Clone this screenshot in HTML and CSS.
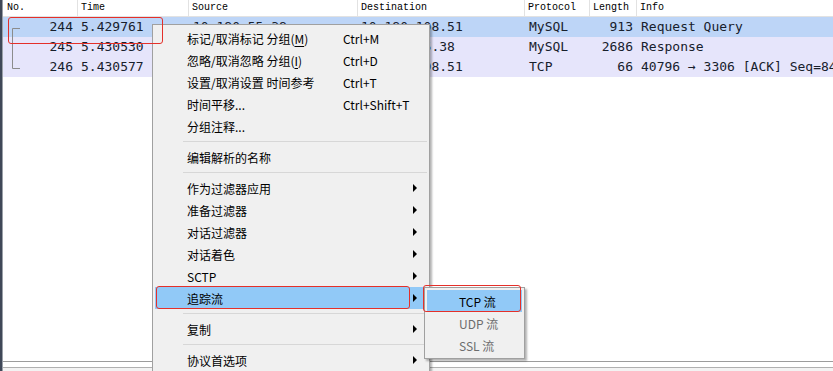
FILE: index.html
```html
<!DOCTYPE html>
<html>
<head>
<meta charset="utf-8">
<link rel="stylesheet" href="styles.css">
</head>
<body>
<div class="window">
  <div class="edge"></div>
  <div class="pane">
    <div class="head cols">
      <div class="h first">No.</div>
      <div class="h">Time</div>
      <div class="h">Source</div>
      <div class="h">Destination</div>
      <div class="h">Protocol</div>
      <div class="h">Length</div>
      <div class="h">Info</div>
    </div>
    <div class="rows">
      <div class="row cols sel">
        <div class="c num">244</div><div class="c">5.429761</div><div class="c src">10.180.55.38</div><div class="c">10.180.108.51</div><div class="c pro">MySQL</div><div class="c len">913</div><div class="c info">Request Query</div>
      </div>
      <div class="row cols tcp">
        <div class="c num">245</div><div class="c">5.430530</div><div class="c src">10.180.108.51</div><div class="c">10.180.55.38</div><div class="c pro">MySQL</div><div class="c len">2686</div><div class="c info">Response</div>
      </div>
      <div class="row cols tcp">
        <div class="c num">246</div><div class="c">5.430577</div><div class="c src">10.180.55.38</div><div class="c">10.180.108.51</div><div class="c pro">TCP</div><div class="c len">66</div><div class="c info">40796 → 3306 [ACK] Seq=848 Ack=2687 Win=65535 Len=0</div>
      </div>
      <svg class="tree" width="10" height="44" viewBox="0 0 10 44">
        <path d="M1.5 1.5 V41.5 M1.5 1.5 H9 M1.5 41.5 H9" fill="none" stroke="#8c8c8c" stroke-width="1"/>
      </svg>
    </div>
    <div class="spacer"></div>
    <div class="foot"><div class="foot-line"></div></div>
  </div>
</div>

<div class="menu">
  <div class="item"><span class="label">标记/取消标记 分组(<u>M</u>)</span><span class="key">Ctrl+M</span></div>
  <div class="item"><span class="label">忽略/取消忽略 分组(<u>I</u>)</span><span class="key">Ctrl+D</span></div>
  <div class="item"><span class="label">设置/取消设置 时间参考</span><span class="key">Ctrl+T</span></div>
  <div class="item"><span class="label">时间平移...</span><span class="key">Ctrl+Shift+T</span></div>
  <div class="item"><span class="label">分组注释...</span></div>
  <div class="sep"></div>
  <div class="item"><span class="label">编辑解析的名称</span></div>
  <div class="sep"></div>
  <div class="item sub"><span class="label">作为过滤器应用</span><span class="arrow"></span></div>
  <div class="item sub"><span class="label">准备过滤器</span><span class="arrow"></span></div>
  <div class="item sub"><span class="label">对话过滤器</span><span class="arrow"></span></div>
  <div class="item sub"><span class="label">对话着色</span><span class="arrow"></span></div>
  <div class="item sub"><span class="label">SCTP</span><span class="arrow"></span></div>
  <div class="item sub hot"><span class="label">追踪流</span><span class="arrow"></span></div>
  <div class="sep"></div>
  <div class="item sub"><span class="label">复制</span><span class="arrow"></span></div>
  <div class="sep"></div>
  <div class="item sub"><span class="label">协议首选项</span><span class="arrow"></span></div>
</div>

<div class="menu submenu">
  <div class="item hot"><span class="label">TCP 流</span></div>
  <div class="item off"><span class="label">UDP 流</span></div>
  <div class="item off"><span class="label">SSL 流</span></div>
</div>

<div class="mark mark-row"></div>
<div class="mark mark-item"></div>
<div class="mark mark-sub"></div>
</body>
</html>
```

FILE: styles.css
```css
html, body {
  margin: 0;
  padding: 0;
}
body {
  width: 833px;
  height: 371px;
  overflow: hidden;
  background: #ffffff;
  position: relative;
}
.window {
  display: flex;
  height: 371px;
}
.edge {
  width: 2px;
  background: #3f4858;
  border-right: 1px solid #9aa0a8;
  flex: none;
}
.pane {
  flex: 1;
  min-width: 0;
  display: flex;
  flex-direction: column;
}
.cols {
  display: grid;
  grid-template-columns: 74px 111px 169px 167px 65px 47px 1fr;
}
.head {
  height: 16px;
  border-bottom: 1px solid #e2e2e2;
  font-family: "Liberation Mono", monospace;
  font-size: 10px;
  line-height: 16px;
  color: #000;
}
.h {
  border-left: 1px solid #e2e2e2;
  padding-left: 3px;
  white-space: nowrap;
  overflow: hidden;
}
.h.first {
  border-left: none;
  padding-left: 4px;
}
.rows {
  position: relative;
}
.row {
  height: 20px;
  line-height: 20px;
  font-family: "DejaVu Sans Mono", monospace;
  font-size: 13px;
  color: #17202c;
  white-space: nowrap;
}
.row.sel {
  background: #bdd5f7;
}
.row.tcp {
  background: #e6e5fb;
}
.c {
  padding-left: 4px;
  overflow: hidden;
}
.c.src, .c.pro {
  padding-left: 5px;
}
.c.info {
  padding-left: 5px;
}
.c.num {
  text-align: right;
  padding-left: 0;
  padding-right: 4px;
}
.c.len {
  text-align: right;
  padding-left: 0;
  padding-right: 3px;
}
.tree {
  position: absolute;
  left: 8px;
  top: 10px;
}
.spacer {
  flex: 1;
}
.foot {
  height: 9px;
  border-top: 1px solid #9c9c9c;
  background: #ffffff;
}
.foot-line {
  margin-top: 5px;
  height: 4px;
  border-top: 1px solid #b0b0b0;
  background: #f3f3f3;
}

/* context menu */
.menu {
  position: absolute;
  left: 152px;
  top: 24px;
  width: 278px;
  box-sizing: border-box;
  padding: 2px;
  background: #f0f0f0;
  border: 1px solid #a0a0a0;
  box-shadow: 2px 2px 2px rgba(0, 0, 0, 0.3);
  font-family: "Noto Sans CJK SC", sans-serif;
  font-size: 12px;
  color: #000;
}
.item {
  position: relative;
  height: 22px;
  display: flex;
  align-items: center;
  padding-left: 32px;
  white-space: nowrap;
}
.item .label {
  width: 156px;
  flex: none;
}
.item u {
  text-decoration: underline;
  text-underline-offset: 2px;
}
.item.hot {
  background: #91c9f7;
}
.item.off {
  color: #6d6d6d;
}
.arrow {
  position: absolute;
  right: 10px;
  top: 7px;
  width: 0;
  height: 0;
  border-left: 4px solid #000;
  border-top: 4px solid transparent;
  border-bottom: 4px solid transparent;
}
.sep {
  height: 9px;
  display: flex;
  align-items: center;
  padding-left: 28px;
}
.sep::after {
  content: "";
  flex: 1;
  height: 1px;
  background: #d7d7d7;
}
.submenu {
  left: 424px;
  top: 287px;
  width: 101px;
}
.submenu .item .label {
  width: auto;
}

/* red annotation boxes */
.mark {
  position: absolute;
  box-sizing: border-box;
  border: 1.5px solid #e4302a;
  border-radius: 3px;
}
.mark-row {
  left: 8px;
  top: 17px;
  width: 155px;
  height: 27px;
}
.mark-item {
  left: 156px;
  top: 286px;
  width: 254px;
  height: 23px;
}
.mark-sub {
  left: 423px;
  top: 285px;
  width: 98px;
  height: 27px;
}
```
